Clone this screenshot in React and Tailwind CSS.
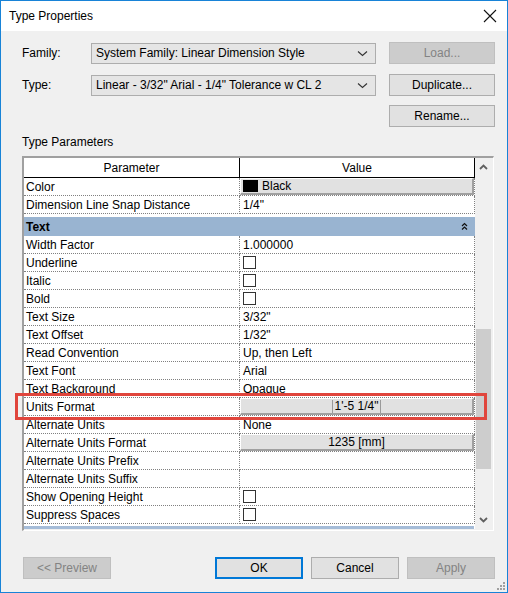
import React from 'react';

const font = { fontFamily: '"Liberation Sans", Arial, sans-serif' };

const rows = [
  { name: 'Color', value: 'color' },
  { name: 'Dimension Line Snap Distance', value: '1/4"' },
  { group: 'Text' },
  { name: 'Width Factor', value: '1.000000' },
  { name: 'Underline', value: 'check' },
  { name: 'Italic', value: 'check' },
  { name: 'Bold', value: 'check' },
  { name: 'Text Size', value: '3/32"' },
  { name: 'Text Offset', value: '1/32"' },
  { name: 'Read Convention', value: 'Up, then Left' },
  { name: 'Text Font', value: 'Arial' },
  { name: 'Text Background', value: 'Opaque' },
  { name: 'Units Format', value: 'units' },
  { name: 'Alternate Units', value: 'None' },
  { name: 'Alternate Units Format', value: 'alt' },
  { name: 'Alternate Units Prefix', value: '' },
  { name: 'Alternate Units Suffix', value: '' },
  { name: 'Show Opening Height', value: 'check' },
  { name: 'Suppress Spaces', value: 'check' },
];

function Chevron() {
  return (
    <svg width="11" height="7" viewBox="0 0 11 7" className="shrink-0">
      <path d="M1 1.5 L5.5 5.5 L10 1.5" fill="none" stroke="#333" strokeWidth="1.1" />
    </svg>
  );
}

function Combo({ text }) {
  return (
    <div className="w-[285px] h-[21px] flex items-center justify-between pl-[4px] pr-[7px] bg-[#e5e5e5] border border-[#adadad] text-[12px] text-black">
      <span>{text}</span>
      <Chevron />
    </div>
  );
}

function Btn({ children, disabled, primary, w = 'w-[106px]' }) {
  let cls = 'bg-[#e1e1e1] border border-[#adadad] text-black';
  if (disabled) cls = 'bg-[#cccccc] border border-[#bfbfbf] text-[#838383]';
  if (primary) cls = 'bg-[#e1e1e1] border-2 border-[#0078d7] text-black';
  return (
    <div className={`${w} h-[22px] flex items-center justify-center text-[12px] ${cls}`}>
      {children}
    </div>
  );
}

// gray push-button look used by some value cells
const cellBtn =
  'h-full flex items-center bg-[#e1e1e1] border-t border-l border-white border-r-2 border-b-2 border-r-[#a0a0a0] border-b-[#a0a0a0]';

function ValueCell({ value }) {
  if (value === 'color') {
    return (
      <div className={`${cellBtn} pl-[2px] gap-[4px]`}>
        <div className="w-[15px] h-[12px] bg-black"></div>
        <span>Black</span>
      </div>
    );
  }
  if (value === 'units') {
    return (
      <div className={`${cellBtn} justify-center`}>
        <span className="px-[2px] border-l border-r border-[#9a9a9a] leading-[13px]">1'-5 1/4"</span>
      </div>
    );
  }
  if (value === 'alt') {
    return (
      <div className={`${cellBtn} justify-center`}>
        <span>1235 [mm]</span>
      </div>
    );
  }
  if (value === 'check') {
    return (
      <div className="h-full flex items-center pl-[3px]">
        <div className="w-[13px] h-[13px] border border-[#333] bg-white"></div>
      </div>
    );
  }
  return <div className="h-full flex items-center pl-[3px]">{value}</div>;
}

function ScrollArrow({ up }) {
  return (
    <svg width="9" height="6" viewBox="0 0 9 6">
      <path d={up ? 'M1 5 L4.5 1.5 L8 5' : 'M1 1 L4.5 4.5 L8 1'} fill="none" stroke="#606060" strokeWidth="1.8" />
    </svg>
  );
}

export default function App() {
  return (
    <div className="relative w-[508px] h-[593px] border border-[#1883d7] bg-[#f0f0f0] flex flex-col overflow-hidden" style={font}>
      {/* title bar */}
      <div className="h-[30px] bg-white flex items-center justify-between pl-[8px] pr-[10px] shrink-0">
        <span className="text-[12px] text-black">Type Properties</span>
        <svg width="14" height="14" viewBox="0 0 14 14">
          <path d="M1 1 L13 13 M13 1 L1 13" stroke="#111" strokeWidth="1.1" />
        </svg>
      </div>

      <div className="flex flex-col pl-[21px] text-[12px] text-black">
        {/* family */}
        <div className="flex items-center mt-[11px] h-[22px]">
          <span className="w-[69px]">Family:</span>
          <Combo text="System Family: Linear Dimension Style" />
          <div className="ml-[13px]">
            <Btn disabled>Load...</Btn>
          </div>
        </div>
        {/* type */}
        <div className="flex items-center mt-[10px] h-[22px]">
          <span className="w-[69px]">Type:</span>
          <Combo text={'Linear - 3/32" Arial - 1/4" Tolerance w CL 2'} />
          <div className="ml-[13px]">
            <Btn>Duplicate...</Btn>
          </div>
        </div>
        <div className="flex mt-[9px] pl-[367px]">
          <Btn>Rename...</Btn>
        </div>

        <div className="mt-[8px] h-[14px] leading-[14px]">Type Parameters</div>

        {/* table */}
        <div className="mt-[7px] w-[472px] h-[375px] flex border-t-2 border-l-2 border-[#a0a0a0] border-r border-b border-r-white border-b-white">
          <div className="w-[451px] flex flex-col bg-white">
            <div className="h-[20px] flex border-b border-black shrink-0">
              <div className="w-[216px] border-r border-black flex items-center justify-center">Parameter</div>
              <div className="w-[235px] border-r border-black flex items-center justify-center">Value</div>
            </div>
            {rows.map((r, i) =>
              r.group ? (
                <div key={i} className="h-[22px] pt-[3px] shrink-0">
                  <div className="h-[19px] w-[451px] flex items-center justify-between pl-[2px] pr-[7px] bg-[#99b4d1] font-bold">
                    <span>{r.group}</span>
                    <svg width="7" height="9" viewBox="0 0 7 9">
                      <path d="M1 4 L3.5 1.5 L6 4 M1 7.5 L3.5 5 L6 7.5" fill="none" stroke="#111" strokeWidth="1.2" />
                    </svg>
                  </div>
                </div>
              ) : (
                <div key={i} className="h-[18px] flex shrink-0">
                  <div className="w-[216px] pl-[2px] flex items-center border-r border-b border-dotted border-[#808080]">
                    {r.name}
                  </div>
                  <div className="w-[235px] border-r border-b border-dotted border-[#808080]">
                    <ValueCell value={r.value} />
                  </div>
                </div>
              )
            )}
            <div className="flex-1"></div>
            <div className="h-[3px] bg-[#a5bcd8] shrink-0 w-[450px]"></div>
            <div className="h-[1px] bg-[#f0f0f0] shrink-0"></div>
          </div>
          {/* scrollbar */}
          <div className="w-[17px] flex flex-col items-center bg-[#f0f0f0]">
            <div className="h-[17px] flex items-center justify-center w-full">
              <ScrollArrow up />
            </div>
            <div className="h-[154px] shrink-0"></div>
            <div className="h-[140px] w-[15px] bg-[#cdcdcd] shrink-0"></div>
            <div className="flex-1"></div>
            <div className="h-[17px] flex items-center justify-center w-full mb-[2px]">
              <ScrollArrow />
            </div>
          </div>
        </div>

        {/* bottom buttons */}
        <div className="flex items-center mt-[26px] w-[473px] pl-[1px]">
          <Btn disabled w="w-[88px]">&lt;&lt; Preview</Btn>
          <div className="ml-auto flex gap-[8px]">
            <Btn primary w="w-[88px]">OK</Btn>
            <Btn w="w-[88px]">Cancel</Btn>
            <Btn disabled w="w-[88px]">Apply</Btn>
          </div>
        </div>
      </div>

      {/* highlight box */}
      <div className="absolute left-[14px] top-[392px] w-[472px] h-[27px] border-[3px] border-[#e0453c] pointer-events-none"></div>

      {/* resize grip */}
      <svg className="absolute right-[1px] bottom-[1px]" width="10" height="10" viewBox="0 0 10 10">
        <rect x="7" y="1" width="2" height="2" fill="#a0a0a0" />
        <rect x="4" y="4" width="2" height="2" fill="#a0a0a0" />
        <rect x="7" y="4" width="2" height="2" fill="#a0a0a0" />
        <rect x="1" y="7" width="2" height="2" fill="#a0a0a0" />
        <rect x="4" y="7" width="2" height="2" fill="#a0a0a0" />
        <rect x="7" y="7" width="2" height="2" fill="#a0a0a0" />
      </svg>
    </div>
  );
}
